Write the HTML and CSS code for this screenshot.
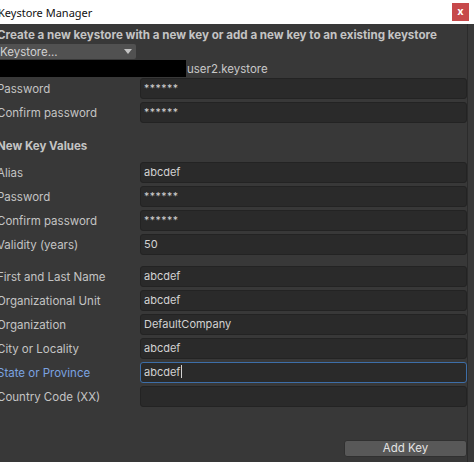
FILE: index.html
```html
<!DOCTYPE html>
<html lang="en">
<head>
    <meta charset="UTF-8">
    <meta name="viewport" content="width=device-width, initial-scale=1.0">
    <title>Keystore Manager</title>
    <link rel="stylesheet" href="styles.css">
</head>
<body>

    <div class="titlebar">
        <span class="title">Keystore Manager</span>
        <span class="close">x</span>
    </div>

    <div class="frame">
        <div class="panel">
            <div class="heading">Create a new keystore with a new key or add a new key to an existing keystore</div>

            <div class="dropdown">
                <span>Keystore...</span>
                <span class="arrow"></span>
            </div>

            <div class="path-row">
                <span class="redacted"></span>
                <span class="path">user2.keystore</span>
            </div>

            <div class="row">
                <label>Password</label>
                <div class="field secret">******</div>
            </div>
            <div class="row">
                <label>Confirm password</label>
                <div class="field secret">******</div>
            </div>

            <div class="section">New Key Values</div>

            <div class="row">
                <label>Alias</label>
                <div class="field">abcdef</div>
            </div>
            <div class="row">
                <label>Password</label>
                <div class="field secret">******</div>
            </div>
            <div class="row">
                <label>Confirm password</label>
                <div class="field secret">******</div>
            </div>
            <div class="row">
                <label>Validity (years)</label>
                <div class="field">50</div>
            </div>

            <div class="group">
                <div class="row">
                    <label>First and Last Name</label>
                    <div class="field">abcdef</div>
                </div>
                <div class="row">
                    <label>Organizational Unit</label>
                    <div class="field">abcdef</div>
                </div>
                <div class="row">
                    <label>Organization</label>
                    <div class="field">DefaultCompany</div>
                </div>
                <div class="row">
                    <label>City or Locality</label>
                    <div class="field">abcdef</div>
                </div>
                <div class="row focused">
                    <label>State or Province</label>
                    <div class="field">abcdef<span class="caret"></span></div>
                </div>
                <div class="row">
                    <label>Country Code (XX)</label>
                    <div class="field"></div>
                </div>
            </div>

            <div class="actions">
                <button class="add-btn">Add Key</button>
            </div>
        </div>
    </div>

</body>
</html>
```

FILE: styles.css
```css
body {
    margin: 0;
    background-color: #ffffff;
    font-family: Inter, "Noto Sans", sans-serif;
    overflow: hidden;
}
.titlebar {
    height: 24px;
    display: flex;
    align-items: center;
    justify-content: space-between;
    background-color: #ffffff;
}
.title {
    margin-left: -2px;
    font-family: "Noto Sans", sans-serif;
    font-size: 11px;
    color: #111111;
}
.close {
    width: 17px;
    height: 18px;
    margin-right: 5px;
    margin-top: -1px;
    background-color: #c7494b;
    color: #ffffff;
    font-size: 11px;
    font-weight: bold;
    line-height: 17px;
    text-align: center;
}
.frame {
    height: 438px;
    background-color: #393939;
}
.panel {
    width: 470px;
    height: 435px;
    margin-left: -3px;
    padding-top: 3px;
    background-color: #383838;
    border-right: 1px solid #2b2b2b;
    border-bottom: 1px solid #555555;
    font-size: 11px;
    color: #c4c4c4;
}
.heading {
    height: 16px;
    line-height: 16px;
    font-size: 11.6px;
    font-weight: bold;
    white-space: nowrap;
}
.dropdown {
    width: 132px;
    height: 15px;
    margin-top: 1px;
    padding: 0 4px 0 3px;
    display: flex;
    align-items: center;
    justify-content: space-between;
    background-color: #515151;
    border-radius: 2px;
    font-size: 11.5px;
    color: #d2d2d2;
}
.arrow {
    width: 0;
    height: 0;
    border-left: 4px solid transparent;
    border-right: 4px solid transparent;
    border-top: 5px solid #c4c4c4;
}
.path-row {
    height: 18px;
    margin-top: 1px;
    display: flex;
    align-items: center;
}
.redacted {
    width: 189px;
    height: 17px;
    background-color: #000000;
    align-self: flex-start;
}
.path {
    margin-left: 1px;
    font-size: 11.5px;
    color: #c8c8c8;
}
.row {
    display: grid;
    grid-template-columns: 143px 327px;
    align-items: center;
    margin-bottom: 3px;
}
.row label {
    font-size: 11.5px;
    white-space: nowrap;
}
.field {
    height: 19px;
    line-height: 19px;
    padding-left: 3px;
    background-color: #2a2a2a;
    border: 1px solid #232323;
    border-radius: 3px;
    color: #d2d2d2;
}
.field.secret {
    letter-spacing: 0.5px;
    font-size: 10.5px;
}
.section {
    margin-top: 15px;
    margin-bottom: 8px;
    height: 16px;
    line-height: 16px;
    font-size: 11.5px;
    font-weight: bold;
}
.group {
    margin-top: 11px;
}
.focused label {
    color: #7ba3e0;
}
.focused .field {
    border-color: #3d6ea8;
}
.caret {
    display: inline-block;
    width: 1px;
    height: 13px;
    margin-left: 1px;
    vertical-align: -2px;
    background-color: #d2d2d2;
}
.actions {
    display: flex;
    justify-content: flex-end;
    margin-top: 33px;
}
.add-btn {
    width: 123px;
    height: 17px;
    padding: 0;
    background-color: #585858;
    border: 1px solid #303030;
    border-radius: 3px;
    color: #e4e4e4;
    font-family: Inter, "Noto Sans", sans-serif;
    font-size: 11.5px;
    line-height: 15px;
}
```
